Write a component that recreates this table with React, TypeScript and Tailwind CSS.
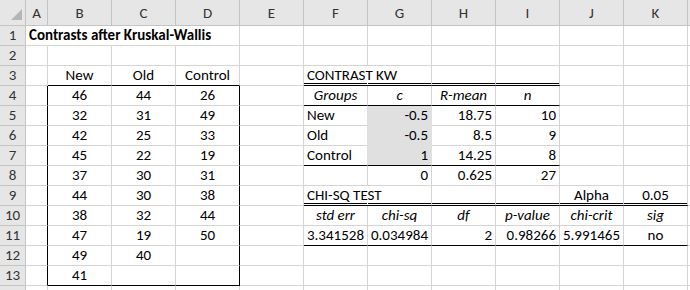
import React from "react";

type Cell = {
  t?: string;
  a?: "l" | "c" | "r";
  i?: boolean;
  b?: boolean;
  fill?: boolean;
  bb?: "g" | "k" | "d" | "n" | "f";
  br?: "g" | "k" | "n" | "f";
  over?: boolean;
};

const COLS = ["A", "B", "C", "D", "E", "F", "G", "H", "I", "J", "K", "L"];
const ROWS = [1, 2, 3, 4, 5, 6, 7, 8, 9, 10, 11, 12, 13, 14];

const data: Record<string, Cell> = {
  A1: { t: "Contrasts after Kruskal-Wallis", b: true, over: true, br: "n" },
  B1: { br: "n" },
  C1: { br: "n" },
  B3: { t: "New", a: "c", bb: "k" },
  C3: { t: "Old", a: "c", bb: "k" },
  D3: { t: "Control", a: "c", bb: "k" },
  F3: { t: "CONTRAST KW", over: true, br: "n", bb: "d" },
  G3: { bb: "d" },
  H3: { bb: "d" },
  I3: { bb: "d" },
  F4: { t: "Groups", a: "c", i: true, bb: "k" },
  G4: { t: "c", a: "c", i: true, bb: "k" },
  H4: { t: "R-mean", a: "c", i: true, bb: "k" },
  I4: { t: "n", a: "c", i: true, bb: "k" },
  F5: { t: "New", br: "f" },
  F6: { t: "Old", br: "f" },
  F7: { t: "Control", br: "f", bb: "k" },
  G5: { t: "-0.5", a: "r", fill: true, bb: "f", br: "f" },
  G6: { t: "-0.5", a: "r", fill: true, bb: "f", br: "f" },
  G7: { t: "1", a: "r", fill: true, bb: "k", br: "f" },
  H5: { t: "18.75", a: "r" },
  H6: { t: "8.5", a: "r" },
  H7: { t: "14.25", a: "r", bb: "k" },
  I5: { t: "10", a: "r" },
  I6: { t: "9", a: "r" },
  I7: { t: "8", a: "r", bb: "k" },
  G8: { t: "0", a: "r" },
  H8: { t: "0.625", a: "r" },
  I8: { t: "27", a: "r" },
  F9: { t: "CHI-SQ TEST", over: true, br: "n", bb: "d" },
  G9: { bb: "d" },
  H9: { bb: "d" },
  I9: { bb: "d" },
  J9: { t: "Alpha", a: "c", bb: "d" },
  K9: { t: "0.05", a: "c", bb: "d" },
  F10: { t: "std err", a: "c", i: true },
  G10: { t: "chi-sq", a: "c", i: true },
  H10: { t: "df", a: "c", i: true },
  I10: { t: "p-value", a: "c", i: true },
  J10: { t: "chi-crit", a: "c", i: true },
  K10: { t: "sig", a: "c", i: true },
  F11: { t: "3.341528", a: "r", bb: "k" },
  G11: { t: "0.034984", a: "r", bb: "k" },
  H11: { t: "2", a: "r", bb: "k" },
  I11: { t: "0.98266", a: "r", bb: "k" },
  J11: { t: "5.991465", a: "r", bb: "k" },
  K11: { t: "no", a: "c", bb: "k" },
};

const newVals = ["46", "32", "42", "45", "37", "44", "38", "47", "49", "41"];
const oldVals = ["44", "31", "25", "22", "30", "30", "32", "19", "40", ""];
const ctlVals = ["26", "49", "33", "19", "31", "38", "44", "50", "", ""];
for (let r = 4; r <= 13; r++) {
  const k = r - 4;
  const last = r === 13;
  data["A" + r] = { ...(data["A" + r] || {}), br: "k" };
  data["B" + r] = { t: newVals[k], a: "c", bb: last ? "k" : undefined };
  data["C" + r] = { t: oldVals[k], a: "c", bb: last ? "k" : undefined };
  data["D" + r] = { t: ctlVals[k], a: "c", br: "k", bb: last ? "k" : undefined };
}

const bbClass = {
  g: "border-b border-b-[#d4d4d4]",
  k: "border-b border-b-black",
  d: "border-b-[3px] border-double border-b-black",
  n: "border-b border-b-transparent",
  f: "border-b border-b-[#e0e0e0]",
};
const brClass = {
  g: "border-r border-r-[#d4d4d4]",
  k: "border-r border-r-black",
  n: "border-r border-r-transparent",
  f: "border-r border-r-[#e0e0e0]",
};
const alignClass = {
  l: "justify-start",
  c: "justify-center",
  r: "justify-end",
};

function GridCell({ id }: { id: string }) {
  const c = data[id] || {};
  const cls = [
    "box-border h-[20px] flex items-start px-[3px] whitespace-nowrap text-black",
    bbClass[c.bb || "g"],
    brClass[c.br || "g"],
    alignClass[c.a || "l"],
    c.fill ? "bg-[#e0e0e0]" : "",
    c.over ? "relative z-10 overflow-visible" : "overflow-hidden",
    c.i ? "italic" : "",
    c.b ? "font-bold" : "",
  ].join(" ");
  return (
    <div className={cls}>
      <span className="leading-[19px]">{c.t}</span>
    </div>
  );
}

export default function App() {
  return (
    <div
      className="w-[690px] h-[290px] overflow-hidden bg-white text-[15px]"
      style={{ fontFamily: "Carlito, Lato, 'Liberation Sans', sans-serif" }}
    >
      <div className="grid grid-cols-[26px_22px_repeat(11,64px)] w-max">
        {/* header row */}
        <div className="box-border h-[26px] bg-[#e6e6e6] border-r border-b border-[#c4c4c4] flex items-end justify-end pr-[3px] pb-[5px]">
          <svg width="11" height="11" viewBox="0 0 11 11">
            <polygon points="11,0 11,11 0,11" fill="#b5b5b5" />
          </svg>
        </div>
        {COLS.map((c) => (
          <div
            key={c}
            className="box-border h-[26px] bg-[#e6e6e6] border-r border-b border-[#c4c4c4] flex items-center justify-center text-[#333] pt-[1px]"
          >
            {c === "L" ? "" : c}
          </div>
        ))}
        {ROWS.map((r) => (
          <React.Fragment key={r}>
            <div className="box-border h-[20px] bg-[#e6e6e6] border-r border-b border-[#c4c4c4] flex items-start justify-center text-[#333]">
              <span className="leading-[19px]">{r === 14 ? "" : r}</span>
            </div>
            {COLS.map((c) => (
              <GridCell key={c + r} id={c + r} />
            ))}
          </React.Fragment>
        ))}
      </div>
    </div>
  );
}
